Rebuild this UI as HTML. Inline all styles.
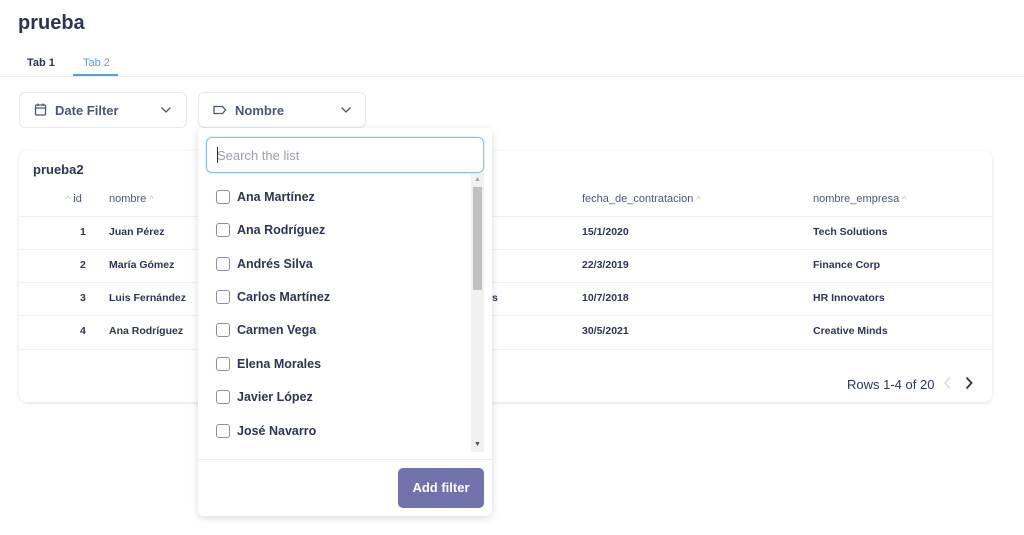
<!DOCTYPE html>
<html><head><meta charset="utf-8"><style>
*{box-sizing:border-box;margin:0;padding:0}
body{width:1024px;height:535px;background:#fff;font-family:"Liberation Sans",sans-serif;color:#2e3553;position:relative;overflow:hidden}
.a{position:absolute}
.t{font-size:12px;font-weight:bold;color:#2e3553;white-space:nowrap}
.c{font-size:10.5px!important;top:auto}
.h{font-size:11px;color:#4c5773;white-space:nowrap}
.car{color:#b8bdc8;font-size:9px}
.line{position:absolute;left:19px;width:973px;height:1px;background:#f0f0f3}
.cb{position:absolute;left:216px;width:14px;height:14px;border:1.5px solid #8a8fa3;border-radius:3px}
.it{position:absolute;left:237px;font-size:12.5px;font-weight:bold;color:#2e3553}
</style></head><body>
<div class="a" style="left:18px;top:12px;font-size:20px;font-weight:bold">prueba</div>
<div class="a t" style="left:27px;top:57px;font-size:11px">Tab 1</div>
<div class="a t" style="left:83px;top:57px;font-size:11px;color:#509ee3;font-weight:normal">Tab 2</div>
<div class="a" style="left:73px;top:74px;width:45px;height:2px;background:#509ee3"></div>
<div class="a" style="left:0;top:76px;width:1024px;height:1px;background:#eeeef1"></div>

<div class="a" style="left:19px;top:92px;width:168px;height:36px;border:1px solid #e6e7eb;border-radius:6px"></div>
<svg class="a" style="left:34px;top:103px" width="13" height="13" viewBox="0 0 13 13" fill="none" stroke="#4c5773" stroke-width="1.3"><rect x="1.5" y="2" width="10" height="10" rx="1"/><path d="M1.5 5h10M4 0.5v2.5M9 0.5v2.5"/></svg>
<div class="a t" style="left:55px;top:103px;font-size:13px;color:#4c5773">Date Filter</div>
<svg class="a" style="left:160px;top:106px" width="12" height="8" viewBox="0 0 12 8" fill="none" stroke="#4c5773" stroke-width="1.3"><path d="M1.5 1.5l4.5 4.5 4.5-4.5"/></svg>

<div class="a" style="left:198px;top:92px;width:168px;height:36px;border:1px solid #e6e7eb;border-radius:6px"></div>
<svg class="a" style="left:213px;top:105px" width="14" height="10" viewBox="0 0 14 10" fill="none" stroke="#4c5773" stroke-width="1.3"><path d="M1 1.5h8.5l3 3.5-3 3.5H1z"/></svg>
<div class="a t" style="left:235px;top:103px;font-size:13px;color:#4c5773">Nombre</div>
<svg class="a" style="left:340px;top:106px" width="12" height="8" viewBox="0 0 12 8" fill="none" stroke="#4c5773" stroke-width="1.3"><path d="M1.5 1.5l4.5 4.5 4.5-4.5"/></svg>

<div class="a" style="left:19px;top:151px;width:973px;height:251px;border-radius:8px;box-shadow:0 1px 4px rgba(0,0,0,.12)"></div>
<div class="a t" style="left:33px;top:162px;font-size:13px">prueba2</div>
<div class="a h" style="left:66px;top:193px"><span class="car">^</span> id</div>
<div class="a h" style="left:109px;top:193px">nombre <span class="car">^</span></div>
<div class="a h" style="left:582px;top:193px">fecha_de_contratacion <span class="car">^</span></div>
<div class="a h" style="left:813px;top:193px">nombre_empresa <span class="car">^</span></div>
<div class="line" style="top:216px"></div><div class="line" style="top:249px"></div><div class="line" style="top:282px"></div><div class="line" style="top:315px"></div><div class="line" style="top:349px"></div>
<div class="a t c" style="left:80px;top:226px">1</div><div class="a t c" style="left:109px;top:226px">Juan Pérez</div><div class="a t c" style="left:582px;top:226px">15/1/2020</div><div class="a t c" style="left:813px;top:226px">Tech Solutions</div>
<div class="a t c" style="left:80px;top:259px">2</div><div class="a t c" style="left:109px;top:259px">María Gómez</div><div class="a t c" style="left:582px;top:259px">22/3/2019</div><div class="a t c" style="left:813px;top:259px">Finance Corp</div>
<div class="a t c" style="left:80px;top:292px">3</div><div class="a t c" style="left:109px;top:292px">Luis Fernández</div><div class="a t c" style="left:492px;top:292px">s</div><div class="a t c" style="left:582px;top:292px">10/7/2018</div><div class="a t c" style="left:813px;top:292px">HR Innovators</div>
<div class="a t c" style="left:80px;top:325px">4</div><div class="a t c" style="left:109px;top:325px">Ana Rodríguez</div><div class="a t c" style="left:582px;top:325px">30/5/2021</div><div class="a t c" style="left:813px;top:325px">Creative Minds</div>
<div class="a t" style="left:847px;top:377px;font-size:13px;font-weight:normal">Rows 1-4 of 20</div>
<svg class="a" style="left:943px;top:376px" width="10" height="14" viewBox="0 0 10 14" fill="none" stroke="#d6d8de" stroke-width="1.5"><path d="M7 1.5l-5 5.5 5 5.5"/></svg>
<svg class="a" style="left:964px;top:376px" width="10" height="14" viewBox="0 0 10 14" fill="none" stroke="#2e3553" stroke-width="1.8"><path d="M2.5 1.5l5 5.5-5 5.5"/></svg>

<div class="a" style="left:198px;top:128px;width:294px;height:388px;background:#fff;border-radius:6px;box-shadow:0 2px 8px rgba(0,0,0,.15)"></div>
<div class="a" style="left:206px;top:137px;width:278px;height:36px;border:1.5px solid #8cc0ee;border-radius:6px;box-shadow:0 0 0 1px #e3f0fb"></div>
<div class="a" style="left:217px;top:148px;font-size:13px;color:#9a9fae">Search the list</div>
<div class="a" style="left:217px;top:147px;width:1px;height:16px;background:#2e3553"></div>
<div class="a" style="left:471px;top:173px;width:13px;height:279px;background:#f1f1f1"></div>
<div class="a" style="left:473px;top:187px;width:9px;height:103px;background:#c1c1c1"></div>
<div class="a" style="left:474px;top:176px;font-size:7px;color:#a3a3a3">▲</div>
<div class="a" style="left:474px;top:441px;font-size:7px;color:#505050">▼</div>
<div class="cb" style="top:190px"></div><div class="it" style="top:190px">Ana Martínez</div>
<div class="cb" style="top:223px"></div><div class="it" style="top:223px">Ana Rodríguez</div>
<div class="cb" style="top:257px"></div><div class="it" style="top:257px">Andrés Silva</div>
<div class="cb" style="top:290px"></div><div class="it" style="top:290px">Carlos Martínez</div>
<div class="cb" style="top:323px"></div><div class="it" style="top:323px">Carmen Vega</div>
<div class="cb" style="top:357px"></div><div class="it" style="top:357px">Elena Morales</div>
<div class="cb" style="top:390px"></div><div class="it" style="top:390px">Javier López</div>
<div class="cb" style="top:424px"></div><div class="it" style="top:424px">José Navarro</div>
<div class="a" style="left:198px;top:459px;width:294px;height:1px;background:#eeeef1"></div>
<div class="a" style="left:398px;top:468px;width:86px;height:40px;background:#7172ad;border-radius:5px;color:#fff;font-size:13px;font-weight:bold;text-align:center;line-height:40px">Add filter</div>
</body></html>
